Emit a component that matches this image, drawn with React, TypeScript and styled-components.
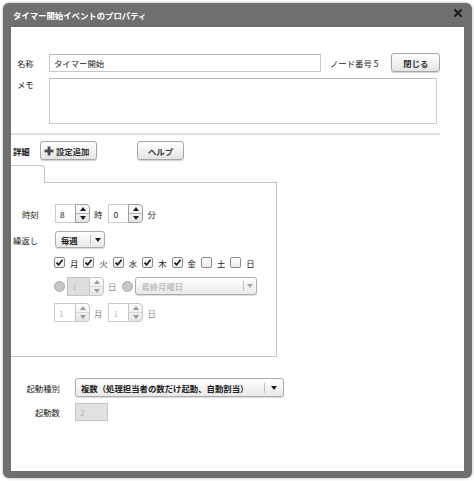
import React from 'react';
import styled, { createGlobalStyle } from 'styled-components';

const GlobalStyle = createGlobalStyle`
  html, body {
    margin: 0;
    padding: 0;
    background: #fff;
  }
  body {
    font-family: "Noto Sans CJK JP", "Noto Sans", sans-serif;
    font-size: 8.4px;
    color: #222;
  }
  * {
    box-sizing: border-box;
  }
`;

type Tone = 'normal' | 'muted' | 'shaded';

const DAYS: Array<[string, boolean]> = [
  ['月', true],
  ['火', true],
  ['水', true],
  ['木', true],
  ['金', true],
  ['土', false],
  ['日', false],
];

function Spinner({ value, width, tone = 'normal' }: { value: string, width: number, tone?: Tone }) {
  return (
    <SpinWrap>
      <SpinInput readOnly value={value} $width={width} $tone={tone} />
      <SpinButtons $tone={tone}>
        <SpinHalf $dir='up' $tone={tone} />
        <SpinHalf $dir='down' $tone={tone} />
      </SpinButtons>
    </SpinWrap>
  );
}

function Select({
  label,
  width,
  height,
  arrowWidth,
  disabled = false
}: {
  label: string,
  width: number,
  height: number,
  arrowWidth: number,
  disabled?: boolean
}) {
  return (
    <SelectBox $width={width} $height={height}>
      <SelectText $disabled={disabled}>{label}</SelectText>
      <SelectDivider />
      <ArrowBox $width={arrowWidth}>
        <Arrow $disabled={disabled} />
      </ArrowBox>
    </SelectBox>
  );
}

export default function App() {
  return (
    <Page>
      <GlobalStyle />
      <Window>
        <TitleBar>
          <Title>タイマー開始イベントのプロパティ</Title>
          <CloseIcon width='8' height='8' viewBox='0 0 8 8'>
            <path d='M1 1 L7 7 M7 1 L1 7' stroke='#1b1b1b' strokeWidth='2' strokeLinecap='square' />
          </CloseIcon>
        </TitleBar>

        <Content>
          <NameRow>
            <FieldLabel>名称</FieldLabel>
            <NameInput readOnly value='タイマー開始' />
            <NodeNumber>ノード番号 5</NodeNumber>
            <Button $width={49} $left={13}>閉じる</Button>
          </NameRow>

          <MemoRow>
            <FieldLabel>メモ</FieldLabel>
            <MemoArea readOnly />
          </MemoRow>

          <Separator />

          <DetailRow>
            <DetailLabel>詳細</DetailLabel>
            <Button $width={57} $align='start'>
              <PlusIcon width='10' height='10' viewBox='0 0 10 10'>
                <rect x='3.6' y='0.5' width='2.8' height='9' fill='#4a4a4a' />
                <rect x='0.5' y='3.6' width='9' height='2.8' fill='#4a4a4a' />
              </PlusIcon>
              設定追加
            </Button>
            <Button $width={47} $left={40}>ヘルプ</Button>
          </DetailRow>

          <TabStrip>
            <Tab />
            <TabFill />
          </TabStrip>

          <Panel>
            <PanelRow $height={19}>
              <PanelLabel $indent={11}>時刻</PanelLabel>
              <Spinner value='8' width={20} />
              <UnitText>時</UnitText>
              <Spinner value='0' width={20} />
              <UnitText>分</UnitText>
            </PanelRow>

            <PanelRow $height={17}>
              <PanelLabel $indent={2}>繰返し</PanelLabel>
              <Select label='毎週' width={50} height={17} arrowWidth={13} />
            </PanelRow>

            <PanelRow $height={13} $inset>
              {DAYS.map(([day, checked]) => (
                <DayItem key={day}>
                  <CheckBox>
                    {checked && (
                      <svg width='9' height='9' viewBox='0 0 9 9'>
                        <path d='M1.5 4.6 L3.6 6.8 L7.6 1.8' fill='none' stroke='#1a1a1a' strokeWidth='1.7' />
                      </svg>
                    )}
                  </CheckBox>
                  <DayText>{day}</DayText>
                </DayItem>
              ))}
            </PanelRow>

            <PanelRow $height={18} $inset>
              <Radio />
              <Spinner value='1' width={22} tone='shaded' />
              <UnitText $muted>日</UnitText>
              <Radio />
              <Select label='最終月曜日' width={122} height={18} arrowWidth={12} disabled />
            </PanelRow>

            <PanelRow $height={19} $inset>
              <Spinner value='1' width={21} tone='muted' />
              <UnitText $muted>月</UnitText>
              <Spinner value='1' width={20} tone='muted' />
              <UnitText $muted>日</UnitText>
            </PanelRow>
          </Panel>

          <StartRow $top={21}>
            <StartLabel>起動種別</StartLabel>
            <Select label='複数（処理担当者の数だけ起動、自動割当）' width={209} height={19} arrowWidth={18} />
          </StartRow>
          <StartRow $top={6}>
            <StartLabel>起動数</StartLabel>
            <CountInput readOnly value='2' />
          </StartRow>
        </Content>
      </Window>
    </Page>
  );
}


const Page = styled.div`
  width: 474px;
  height: 481px;
  padding: 3px 2px 3px 3px;
`;

const Window = styled.div`
  display: flex;
  flex-direction: column;
  width: 469px;
  height: 475px;

  padding: 0 8px 7px 8px;
  border-radius: 6px;
  background: #6f6f6f;
  box-shadow: 0 0 3px rgba(0, 0, 0, 0.35);
`;

const TitleBar = styled.div`
  display: flex;
  height: 24px;
  align-items: center;
  justify-content: space-between;
  padding: 0 2px;
`;

const Title = styled.span`
  font-weight: 700;
  font-size: 8.4px;
  line-height: 12px;
  color: #fff;
`;

const CloseIcon = styled.svg`
  display: block;
  margin-top: -4px;
`;

const Content = styled.div`
  display: flex;
  flex: 1 1 0;
  flex-direction: column;
  padding-top: 26px;
  background: #fff;
`;

const NameRow = styled.div`
  display: flex;
  height: 19px;
  align-items: center;
  padding-left: 6px;
`;

const FieldLabel = styled.span`
  width: 32px;
  line-height: 12px;
`;

const NameInput = styled.input`
  width: 272px;
  height: 18px;
  padding: 0 4px;
  border: 1px solid #c9c9c9;
  border-top-color: #b9b9b9;
  border-radius: 0;
  font-family: inherit;
  font-size: 8.4px;
  color: #222;
  outline: none;
`;

const NodeNumber = styled.span`
  margin-left: 9px;
  line-height: 12px;
`;

interface ButtonProps {
  $width: number;
  $left?: number;
  $align?: 'center' | 'start';
}
const Button = styled.button<ButtonProps>`
  display: flex;
  width: ${({ $width }) => $width}px;
  height: 19px;
  align-items: center;
  justify-content: ${({ $align }) => $align == 'start' ? 'flex-start' : 'center'};
  gap: 2px;
  margin-left: ${({ $left }) => $left ?? 0}px;

  padding: ${({ $align }) => $align == 'start' ? '0 0 0 3px' : '0'};
  border: 1px solid #a7a7a7;
  border-radius: 3px;
  background: linear-gradient(#ffffff, #e4e4e4);
  box-shadow: 0 1px 1px rgba(0, 0, 0, 0.18);

  font-family: inherit;
  font-weight: 700;
  font-size: 8.4px;
  color: #333;
`;

const MemoRow = styled.div`
  display: flex;
  margin-top: 6px;
  padding-left: 6px;
`;

const MemoArea = styled.textarea`
  width: 388px;
  height: 46px;
  border: 1px solid #cbcbcb;
  border-top-color: #bcbcbc;
  resize: none;
  outline: none;
`;

const Separator = styled.div`
  width: 429px;
  height: 2px;
  margin-top: 9px;
  background: #e1e1e1;
`;

const DetailRow = styled.div`
  display: flex;
  height: 19px;
  align-items: center;
  margin-top: 6px;
  padding-left: 2px;
`;

const DetailLabel = styled.span`
  width: 27px;
  font-weight: 700;
  line-height: 12px;
`;

const PlusIcon = styled.svg`
  display: block;
  flex-shrink: 0;
`;

const TabStrip = styled.div`
  display: flex;
  width: 266px;
  height: 18px;
  margin-top: 5px;
`;

const Tab = styled.div`
  width: 34px;
  height: 18px;
  border-top: 1px solid #c4c4c4;
  border-right: 1px solid #c4c4c4;
  border-top-right-radius: 4px;
`;

const TabFill = styled.div`
  flex: 1 1 0;
  border-bottom: 1px solid #c4c4c4;
`;

const Panel = styled.div`
  display: flex;
  flex-direction: column;
  gap: 8px;
  width: 266px;
  height: 174px;
  padding-top: 21px;
  border-right: 1px solid #c4c4c4;
  border-bottom: 1px solid #c4c4c4;
`;

interface PanelRowProps {
  $height: number;
  $inset?: boolean;
}
const PanelRow = styled.div<PanelRowProps>`
  display: flex;
  height: ${({ $height }) => $height}px;
  align-items: center;
  padding-left: ${({ $inset }) => $inset ? '43px' : '0'};
`;

const PanelLabel = styled.span<{ $indent: number }>`
  width: 44px;
  padding-left: ${({ $indent }) => $indent}px;
  line-height: 12px;
`;

const UnitText = styled.span<{ $muted?: boolean }>`
  margin: 0 6px 0 4px;
  line-height: 12px;
  color: ${({ $muted }) => $muted ? '#8a8a8a' : '#222'};
`;

const SpinWrap = styled.div`
  display: flex;
  height: 19px;
`;

const SpinInput = styled.input<{ $width: number, $tone: Tone }>`
  width: ${({ $width }) => $width}px;
  height: 19px;
  padding: 0 0 0 4px;
  border: 1px solid ${({ $tone }) => $tone == 'shaded' ? '#c2c2c2' : '#cbcbcb'};
  border-right: none;
  border-radius: 0;
  background: ${({ $tone }) => $tone == 'shaded' ? '#dedede' : '#fff'};
  font-family: inherit;
  font-size: 8.4px;
  color: ${({ $tone }) => $tone == 'normal' ? '#222' : '#bdbdbd'};
  outline: none;
`;

const SpinButtons = styled.div<{ $tone: Tone }>`
  display: flex;
  flex-direction: column;
  width: 15px;
  height: 19px;
  border: 1px solid ${({ $tone }) => $tone == 'normal' ? '#9f9f9f' : '#c6c6c6'};
  border-radius: 0 4px 4px 0;
  background: linear-gradient(#fdfdfd, #e6e6e6);
  overflow: hidden;
`;

const SpinHalf = styled.div<{ $dir: 'up' | 'down', $tone: Tone }>`
  display: flex;
  flex: 1 1 0;
  align-items: center;
  justify-content: center;
  border-top: ${({ $dir, $tone }) => $dir == 'down' ? `1px solid ${$tone == 'normal' ? '#b5b5b5' : '#d8d8d8'}` : 'none'};

  &::after {
    content: '';
    border-left: 3px solid transparent;
    border-right: 3px solid transparent;
    border-bottom: ${({ $dir, $tone }) => $dir == 'up' ? `4px solid ${$tone == 'normal' ? '#1e1e1e' : '#9a9a9a'}` : 'none'};
    border-top: ${({ $dir, $tone }) => $dir == 'down' ? `4px solid ${$tone == 'normal' ? '#1e1e1e' : '#9a9a9a'}` : 'none'};
  }
`;

const SelectBox = styled.div<{ $width: number, $height: number }>`
  display: flex;
  width: ${({ $width }) => $width}px;
  height: ${({ $height }) => $height}px;
  align-items: center;

  border: 1px solid #adadad;
  border-radius: 3px;
  background: linear-gradient(#ffffff, #e9e9e9);
  box-shadow: 0 1px 1px rgba(0, 0, 0, 0.15);
`;

const SelectText = styled.span<{ $disabled: boolean }>`
  flex: 1 1 0;
  padding-left: 5px;
  font-weight: 700;
  line-height: 12px;
  color: ${({ $disabled }) => $disabled ? '#c2c2c2' : '#222'};
  white-space: nowrap;
  overflow: hidden;
`;

const SelectDivider = styled.div`
  width: 1px;
  height: 10px;
  background: #c2c2c2;
`;

const ArrowBox = styled.div<{ $width: number }>`
  display: flex;
  width: ${({ $width }) => $width}px;
  justify-content: center;
`;

const Arrow = styled.div<{ $disabled: boolean }>`
  border-left: 3px solid transparent;
  border-right: 3px solid transparent;
  border-top: 4px solid ${({ $disabled }) => $disabled ? '#a8a8a8' : '#1e1e1e'};
`;

const DayItem = styled.div`
  display: flex;
  align-items: center;
  gap: 5px;
  margin-right: 5px;
`;

const CheckBox = styled.span`
  display: flex;
  width: 11px;
  height: 11px;
  align-items: center;
  justify-content: center;
  border: 1px solid #8c8c8c;
  border-radius: 2px;
  background: linear-gradient(#ffffff, #ececec);
`;

const DayText = styled.span`
  line-height: 12px;
`;

const Radio = styled.span`
  width: 11px;
  height: 11px;
  margin-right: 2px;
  border: 1px solid #a9a9a9;
  border-radius: 50%;
  background: #c6c6c6;
`;

const StartRow = styled.div<{ $top: number }>`
  display: flex;
  align-items: center;
  margin-top: ${({ $top }) => $top}px;
`;

const StartLabel = styled.span`
  width: 49px;
  margin-right: 15px;
  text-align: right;
  line-height: 12px;
`;

const CountInput = styled.input`
  width: 33px;
  height: 18px;
  padding: 0 0 0 4px;
  border: 1px solid #c4c4c4;
  border-radius: 0;
  background: #e2e2e2;
  font-family: inherit;
  font-size: 8.4px;
  color: #bdbdbd;
  outline: none;
`;
